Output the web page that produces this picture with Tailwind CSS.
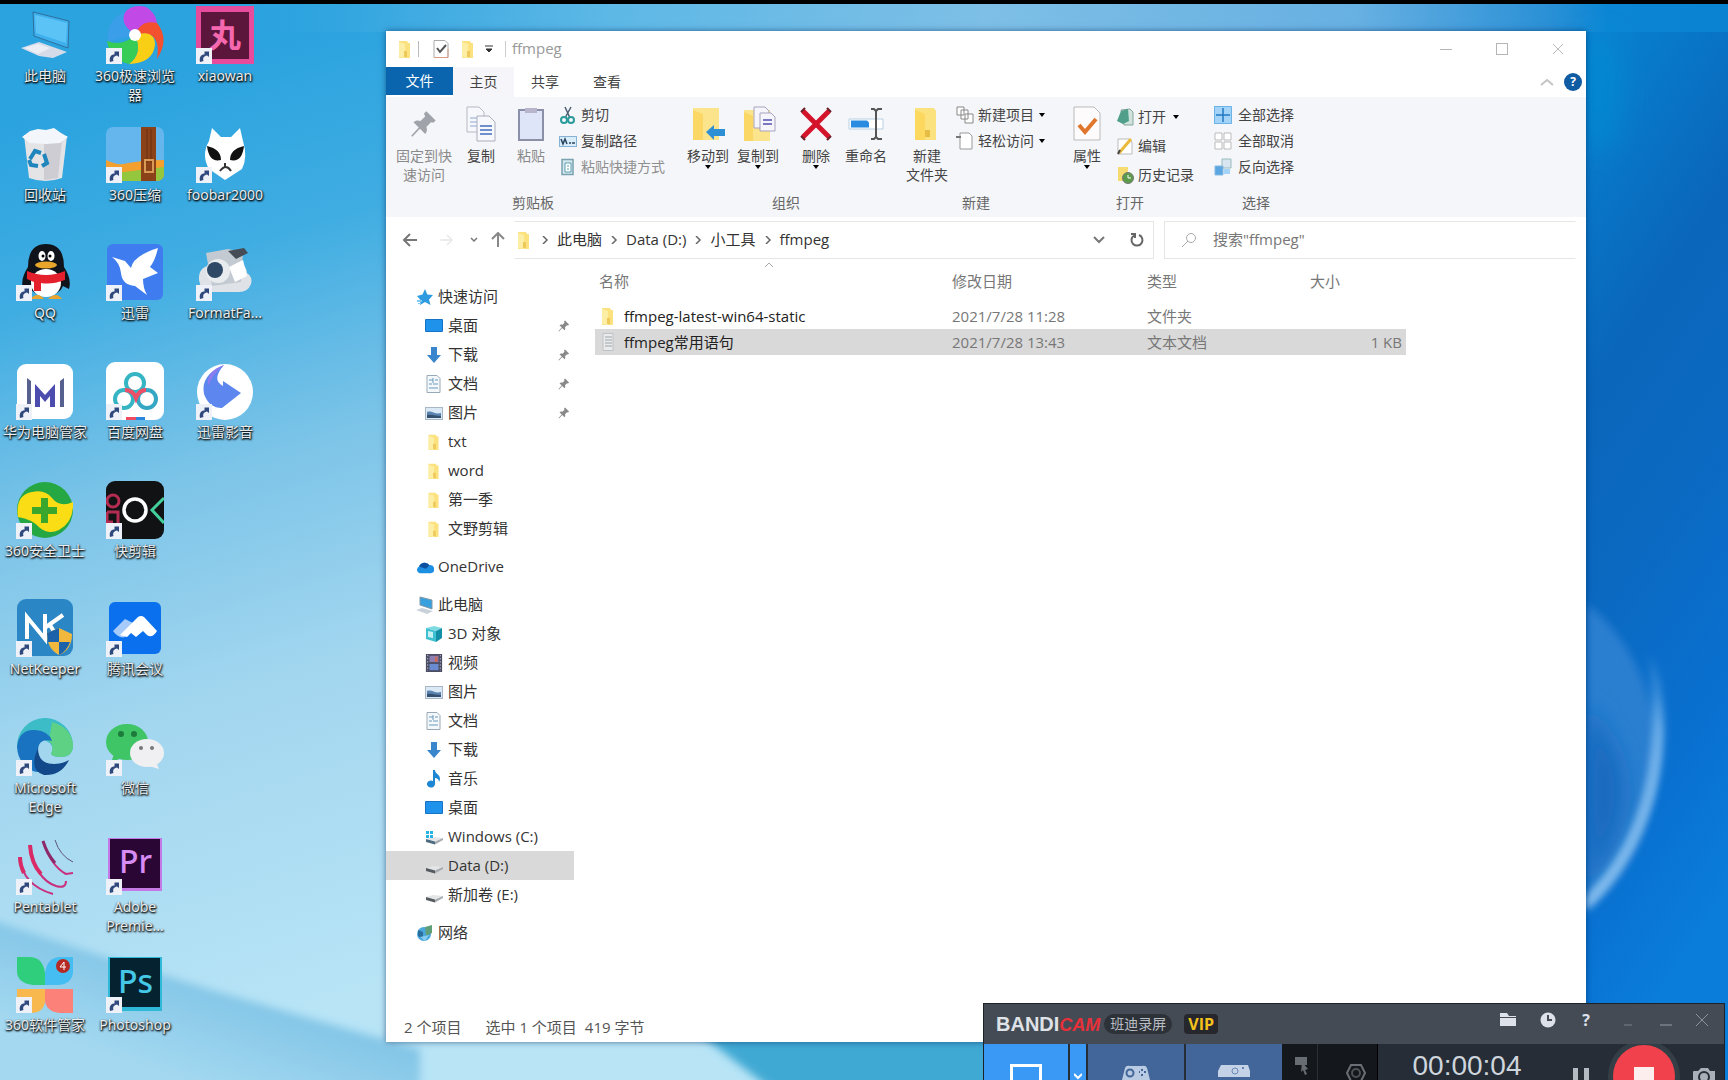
<!DOCTYPE html>
<html lang="zh-CN">
  <head>
    <meta charset="UTF-8" />
    <meta name="viewport" content="width=device-width, initial-scale=1.0" />
    <title>ffmpeg</title>
    <script src="https://cdn.jsdelivr.net/npm/@tailwindcss/browser@4"></script>
  </head>
  <body class="relative h-screen overflow-hidden bg-black pt-1 text-sm text-[#333] font-['Open_Sans','Noto_Sans_CJK_SC',sans-serif]">
    <!-- shared icons -->
    <svg class="hidden">
      <symbol id="shortcut" viewBox="0 0 16 16">
        <rect width="16" height="16" fill="#eef2f8" />
        <path d="M4 14C3 9 5 6.500 8.500 6.500V3.500H13V9L11 7.500C8 8 6.500 10 7.500 13Z" fill="#30497d" />
      </symbol>
      <symbol id="folder" viewBox="0 0 18 20">
        <path d="M3 2h8l1 2h2v15H3z" fill="#fbe27e" />
        <path d="M3 3l6 2v14l-6-1z" fill="#fdeea6" />
        <path d="M8 12h3v6H8z" fill="#eec95a" />
      </symbol>
      <symbol id="pin" viewBox="0 0 24 24">
        <path d="M14 1l8 8-2 2-2-.5-4 4c1 2.500.5 4.500-1 6l-4.500-4.500L2 23l-1-1 6.500-7L3 10.500c1.500-1.500 4-2 6-1l4-4L12 3z" fill="currentColor" />
      </symbol>
      <symbol id="star" viewBox="0 0 18 18">
        <path d="M9 1l2.300 5.600L17 7l-4 4.500L14.500 17 9 14l-5 3 .5-5L1 8l5.500-1.500z" fill="#2e9be0" />
        <path d="M1 12h5v2H1zM2 15h3v1H2z" fill="#7ec8f2" />
      </symbol>
      <symbol id="desktop" viewBox="0 0 18 18">
        <rect y="2" width="18" height="13" rx="1" fill="#1673c6" />
        <rect x="1" y="3" width="16" height="11" fill="#1f93ec" />
      </symbol>
      <symbol id="download" viewBox="0 0 18 18">
        <path d="M6 1h6v8h4l-7 8-7-8h4z" fill="#3a86cc" />
      </symbol>
      <symbol id="document" viewBox="0 0 18 18">
        <path d="M2 .5h10l3 3v14H2z" fill="#f4f8fb" stroke="#9aa9b7" />
        <path d="M4 5h4M10 5h3M4 9h3M8 9h5M4 13h9M8 3v5" stroke="#6899bd" />
      </symbol>
      <symbol id="picture" viewBox="0 0 18 18">
        <rect x=".5" y="3.500" width="17" height="12" fill="#dbe9f6" stroke="#a8b6c6" />
        <path d="M2 8c5-2 8 3 14 1v5H2z" fill="#5b83b0" />
        <path d="M2 11c5-1 9 1 14 1v2H2z" fill="#35506f" />
      </symbol>
      <symbol id="cloud" viewBox="0 0 20 16">
        <path d="M4 15a4 4 0 0 1-.5-7.500A6.500 6.500 0 0 1 15 6a4.500 4.500 0 0 1 1.500 9z" fill="#1d8fe3" />
        <path d="M3.500 7.500A6.500 6.500 0 0 1 15 6l-4 4z" fill="#0b4f9e" />
      </symbol>
      <symbol id="pc" viewBox="0 0 18 18">
        <path d="M4 1l12 3v9L4 9z" fill="#38a0dc" stroke="#8398a8" />
        <path d="M0 14l6-2 11 3-6 3z" fill="#c9d2da" />
      </symbol>
      <symbol id="cube" viewBox="0 0 18 18">
        <path d="M1 3l8-2 8 2-6 3z" fill="#7fdbe2" />
        <path d="M1 3l10 3v11L1 14z" fill="#3fc0d1" />
        <path d="M17 3l-6 3v11l6-4z" fill="#128ea6" />
        <path d="M3 6l5 1v6l-5-1z" fill="#c7f1f4" />
      </symbol>
      <symbol id="video" viewBox="0 0 18 20">
        <rect width="18" height="20" fill="#4a4c63" />
        <rect x="4" y="2" width="10" height="7" fill="#8d7fb2" />
        <rect x="4" y="11" width="10" height="7" fill="#6a8bd0" />
        <path d="M10 3h3v6h-3z" fill="#c96a5b" />
        <path d="M2 1v18M16 1v18" stroke="#c8cbd8" stroke-dasharray="1.500 2" />
      </symbol>
      <symbol id="music" viewBox="0 0 18 18">
        <path d="M8 0h2c0 4 5 4 5 9 0 1-.5 2-1 3 0-3-2-4-4-4v6a4 3.500 0 1 1-2-3z" fill="#1d87d3" />
      </symbol>
      <symbol id="drive" viewBox="0 0 18 18">
        <path d="M1 11l7-2 10 1-8 3z" fill="#e3e5e7" />
        <path d="M1 11l9 2.500v3L1 14z" fill="#555b61" />
        <path d="M10 13.500L18 10v2l-8 4.500z" fill="#a8adb2" />
      </symbol>
      <symbol id="windrive" viewBox="0 0 18 18">
        <path d="M1 11l7-2 10 1-8 3z" fill="#e3e5e7" />
        <path d="M1 11l9 2.500v3L1 14z" fill="#4e6b80" />
        <path d="M10 13.500L18 10v2l-8 4.500z" fill="#a8adb2" />
        <path d="M1 3h3v3H1zM5 3h3v3H5zM1 7h3v3H1zM5 7h3v3H5z" fill="#27b3e4" />
      </symbol>
      <symbol id="network" viewBox="0 0 18 18">
        <circle cx="8" cy="10" r="7" fill="#49a7de" />
        <path d="M2 6l5 2v7l-5-3z" fill="#2b6f9e" />
        <path d="M9 3l7-2v8l-6 3z" fill="#5f9f7a" />
        <path d="M4 13l9-2-4 6z" fill="#85cdf0" />
      </symbol>
    </svg>

    <main class="relative h-full overflow-hidden bg-[#2ba3df]">
      <!-- wallpaper -->
      <svg class="absolute inset-0 h-full w-full" viewBox="0 0 1728 1076" preserveAspectRatio="none">
        <defs>
          <linearGradient id="sky" gradientUnits="userSpaceOnUse" x1="60" y1="100" x2="330" y2="1000">
            <stop offset="0" stop-color="#2ba3df" />
            <stop offset=".2" stop-color="#40ade2" />
            <stop offset=".42" stop-color="#7cc4e8" />
            <stop offset=".65" stop-color="#a2d6ef" />
            <stop offset="1" stop-color="#b8e4f6" />
          </linearGradient>
          <linearGradient id="top" x1="0" x2="1">
            <stop offset="0" stop-color="#2ba3df" stop-opacity="0" />
            <stop offset=".1" stop-color="#3ba9e1" />
            <stop offset=".25" stop-color="#5db8e6" />
            <stop offset=".5" stop-color="#7dbfe6" />
            <stop offset=".75" stop-color="#67b0e2" />
            <stop offset=".88" stop-color="#2a90d6" />
            <stop offset=".92" stop-color="#0a86d4" />
            <stop offset="1" stop-color="#0a82d2" />
          </linearGradient>
          <linearGradient id="right" x1="0" y1="0" x2="0.2" y2="1">
            <stop offset="0" stop-color="#0a86d4" />
            <stop offset=".12" stop-color="#087bcb" />
            <stop offset=".35" stop-color="#0a66ba" />
            <stop offset=".55" stop-color="#0b69c1" />
            <stop offset=".8" stop-color="#0970d0" />
            <stop offset="1" stop-color="#0a7ddb" />
          </linearGradient>
          <linearGradient id="wave" gradientUnits="userSpaceOnUse" x1="200" y1="980" x2="170" y2="1070">
            <stop offset="0" stop-color="#84c6e7" />
            <stop offset="1" stop-color="#a3d8f0" />
          </linearGradient>
          <linearGradient id="arc" x1="0" y1="0" x2="0" y2="1">
            <stop offset="0" stop-color="#7db9ee" stop-opacity="0" />
            <stop offset=".3" stop-color="#7db9ee" />
            <stop offset="1" stop-color="#8cc4f2" />
          </linearGradient>
          <filter id="soft" x="-50%" y="-50%" width="200%" height="200%"><feGaussianBlur stdDeviation="12" /></filter>
          <filter id="edge" x="-50%" y="-50%" width="200%" height="200%"><feGaussianBlur stdDeviation="4" /></filter>
        </defs>
        <rect width="1728" height="1076" fill="url(#sky)" />
        <path d="M-20 912C80 945 200 985 420 1045V1100H-20z" fill="url(#wave)" filter="url(#edge)" />
        <path d="M700 1030H1010V1100H790z" fill="#3fa9d3" filter="url(#edge)" />
        <rect x="1586" width="142" height="1076" fill="url(#right)" />
        <rect x="240" width="1488" height="28" fill="url(#top)" />
        <ellipse cx="1600" cy="90" rx="24" ry="60" fill="#0790d6" fill-opacity=".5" filter="url(#soft)" />
        <path d="M1586 600C1640 640 1670 720 1650 800C1640 850 1610 890 1586 905Z" fill="#2b7fd0" filter="url(#edge)" />
        <path d="M1586 700C1630 760 1640 800 1586 885Z" fill="#1468bd" filter="url(#soft)" />
        <path d="M1650 650C1676 760 1640 850 1584 903" fill="none" stroke="url(#arc)" stroke-width="8" filter="url(#edge)" />
        <path d="M1654 690C1664 770 1640 845 1588 896" fill="none" stroke="url(#arc)" stroke-width="5" filter="url(#edge)" />
      </svg>

      <!-- desktop shortcuts -->
      <ul id="shortcuts" class="absolute inset-y-0 left-0 grid grid-flow-col grid-rows-9 auto-cols-[90px] pt-[2px] pb-[6px] font-['Noto_Sans','Noto_Sans_CJK_SC',sans-serif]"></ul>

      <!-- explorer window -->
      <section class="absolute top-[27px] right-[142px] bottom-[38px] left-[386px] flex flex-col bg-white shadow-[0_0_6px_rgba(0,40,90,0.6)]">
        <header class="flex h-9 items-center pl-2.5 text-[15px] text-[#999]">
          <svg class="h-5 w-[18px]"><use href="#folder" /></svg>
          <span class="ml-1 h-4 w-px bg-[#bbb]"></span>
          <svg class="ml-3.5 h-5 w-4" viewBox="0 0 16 20">
            <path d="M1 1.500h11l3 3v14H1z" fill="#fff" stroke="#aaa" />
            <path d="M1 18.500h14V10" fill="none" stroke="#dc9a83" />
            <path d="M4 9l3 4 6-7" fill="none" stroke="#555" stroke-width="2" />
          </svg>
          <svg class="ml-2.5 h-5 w-[18px]"><use href="#folder" /></svg>
          <button aria-label="自定义快速访问工具栏" class="ml-1.5 w-3">
            <svg class="h-3 w-3" viewBox="0 0 12 12"><path d="M2 3h8M3 6h6l-3 3z" fill="#333" stroke="#333" /></svg>
          </button>
          <span class="ml-2.5 h-4 w-px bg-[#ccc]"></span>
          <h1 class="ml-1.5">ffmpeg</h1>
          <div class="ml-auto flex">
            <button aria-label="最小化" class="flex h-9 w-14 items-center justify-center"><svg class="h-3 w-3" viewBox="0 0 12 12"><path d="M0 6.500h12" stroke="#b5b5b5" /></svg></button>
            <button aria-label="最大化" class="flex h-9 w-14 items-center justify-center"><svg class="h-3 w-3" viewBox="0 0 12 12"><rect x=".5" y=".5" width="11" height="11" fill="none" stroke="#b5b5b5" /></svg></button>
            <button aria-label="关闭" class="flex h-9 w-14 items-center justify-center"><svg class="h-2.5 w-2.5" viewBox="0 0 10 10"><path d="M0 0l10 10M10 0L0 10" stroke="#bbb" /></svg></button>
          </div>
        </header>

        <div class="flex h-[30px] shrink-0 text-[#444]">
          <button class="h-7 w-[67px] bg-[#0a64ae] text-white">文件</button>
          <button class="w-[61px] bg-[#f6f6fa]">主页</button>
          <button class="w-[62px]">共享</button>
          <button class="w-[62px]">查看</button>
          <div class="ml-auto flex items-center gap-2.5 pr-1">
            <button aria-label="最小化功能区"><svg class="h-2 w-3.5" viewBox="0 0 14 8"><path d="M1 7l6-5 6 5" fill="none" stroke="#c4c4c4" stroke-width="2" /></svg></button>
            <button aria-label="帮助" class="h-[18px] w-[18px] rounded-full bg-[#0f5ca3] text-xs leading-[18px] font-bold text-white">?</button>
          </div>
        </div>

        <!-- ribbon -->
        <div class="flex h-[120px] shrink-0 bg-[#f5f6fa] pt-[5px] pl-[7px] text-[#444]">
          <div class="flex w-[280px] flex-col">
            <div class="flex flex-1">
              <button class="flex w-[62px] flex-col items-center pt-1 leading-[19px] text-[#8a8a8a]">
                <svg class="mt-1 mb-2 h-7 w-7 shrink-0 text-[#a0a4aa]"><use href="#pin" /></svg>
                固定到快<br />速访问
              </button>
              <button class="flex w-[52px] flex-col items-center pt-1 leading-[19px]">
                <svg class="mb-1 h-9 w-8 shrink-0" viewBox="0 0 32 36">
                  <path d="M2 1h12l5 5v20H2z" fill="#f7f8fb" stroke="#b5b9c4" />
                  <path d="M5 12h7M5 16h7M5 20h7" stroke="#8fa7d2" />
                  <path d="M12 10h12l6 6v19H12z" fill="#f7f8fb" stroke="#a9aebb" />
                  <path d="M15 20h12M15 24h12M15 28h12" stroke="#6d8fcb" stroke-width="2" />
                </svg>
                复制
              </button>
              <button class="flex w-12 flex-col items-center pt-1 leading-[19px] text-[#8a8a8a]">
                <svg class="mb-1 h-9 w-7 shrink-0" viewBox="0 0 28 36">
                  <path d="M2 4h24v30H2z" fill="#dfe5f8" stroke="#8b90a8" stroke-width="2" />
                  <path d="M8 2h12v5H8z" fill="#b7b4cc" />
                </svg>
                粘贴
              </button>
              <div class="ml-1 flex flex-col">
                <button class="flex h-[26px] items-center gap-1">
                  <svg class="h-[18px] w-[18px]" viewBox="0 0 18 18"><path d="M6 1l5 11M12 1L6 12" stroke="#4b5f74" stroke-width="1.500" /><circle cx="5" cy="14" r="3" fill="none" stroke="#2a9b9b" stroke-width="2" /><circle cx="12" cy="14" r="3" fill="none" stroke="#2a9b9b" stroke-width="2" /></svg>
                  剪切
                </button>
                <button class="flex h-[26px] items-center gap-1">
                  <svg class="h-[18px] w-[18px]" viewBox="0 0 18 18"><rect x=".5" y="4.500" width="17" height="10" fill="#d9ecfa" stroke="#86b2d4" /><path d="M2 7l2 5 2-5 2 5M10 11h2M13 11h3" fill="none" stroke="#27435f" stroke-width="1.500" /></svg>
                  复制路径
                </button>
                <button class="flex h-[26px] items-center gap-1 text-[#8f8f8f]">
                  <svg class="h-[18px] w-[18px]" viewBox="0 0 18 18"><path d="M3 1.500h11v15H3z" fill="#d4e7ee" stroke="#7aa3b0" stroke-width="1.500" /><path d="M6 5h6v9H6z" fill="#fff" stroke="#5b9fb2" /><path d="M8 8h2M8 11h2" stroke="#5b9fb2" /></svg>
                  粘贴快捷方式
                </button>
              </div>
            </div>
            <p class="pb-1 text-center leading-5 text-[#666]">剪贴板</p>
          </div>

          <div class="ml-[9px] flex w-[208px] flex-col">
            <div class="flex flex-1">
              <button class="flex w-[52px] flex-col items-center pt-1 leading-[19px]">
                <svg class="mb-1 h-9 w-9 shrink-0" viewBox="0 0 36 36">
                  <path d="M3 2h26v32H3z" fill="#fce48c" />
                  <path d="M3 4l10 4v26H3z" fill="#fbd866" />
                  <path d="M16 26l8-7v4h11v7H24v4z" fill="#2f8fd4" />
                </svg>
                移动到
                <svg class="h-1 w-2" viewBox="0 0 8 4"><path d="M1 0h6L4 4z" /></svg>
              </button>
              <button class="flex w-12 flex-col items-center pt-1 leading-[19px]">
                <svg class="mb-1 h-9 w-9 shrink-0" viewBox="0 0 36 36">
                  <path d="M4 4h26v31H4z" fill="#fce48c" />
                  <path d="M4 6l9 4v25H4z" fill="#fbd866" />
                  <path d="M14 1h11l4 4v17H14z" fill="#f6f5fb" stroke="#a7a3bd" />
                  <path d="M20 7h11l4 4v14H20z" fill="#f6f5fb" stroke="#a7a3bd" />
                  <path d="M23 14h9M23 18h9" stroke="#7b79c4" stroke-width="2" />
                </svg>
                复制到
                <svg class="h-1 w-2" viewBox="0 0 8 4"><path d="M1 0h6L4 4z" /></svg>
              </button>
              <button class="ml-2 flex w-[52px] flex-col items-center pt-1 leading-[19px]">
                <svg class="mb-1 h-9 w-8 shrink-0" viewBox="0 0 32 36">
                  <path d="M3 5l26 26M29 5L3 31" stroke="#d3142a" stroke-width="5" />
                  <path d="M1 6l4-4M31 6l-4-4M1 30l4 4M31 30l-4 4" stroke="#6b1a26" stroke-width="2" />
                </svg>
                删除
                <svg class="h-1 w-2" viewBox="0 0 8 4"><path d="M1 0h6L4 4z" /></svg>
              </button>
              <button class="flex w-12 flex-col items-center pt-1 leading-[19px]">
                <svg class="mb-1 h-9 w-9 shrink-0" viewBox="0 0 36 36">
                  <path d="M1 13h34v10H1z" fill="#fff" stroke="#b8cfe3" />
                  <path d="M3 14.500h16l2 2v5H3z" fill="#2b8be0" />
                  <path d="M23 3h3l2 2 2-2h4M23 33h3l2-2 2 2h4M28 4v28" fill="none" stroke="#555" stroke-width="2" />
                </svg>
                重命名
              </button>
            </div>
            <p class="pb-1 text-center leading-5 text-[#666]">组织</p>
          </div>

          <div class="ml-3 flex w-[148px] flex-col">
            <div class="flex flex-1">
              <button class="flex w-[50px] flex-col items-center pt-1 leading-[19px]">
                <svg class="mb-1 h-9 w-9 shrink-0" viewBox="0 0 36 36">
                  <path d="M6 2h19l2 3v29H6z" fill="#fbe27e" />
                  <path d="M6 4l10 4v26H6z" fill="#fcd85f" />
                  <path d="M16 24h5v7h-5z" fill="#e5bd45" />
                </svg>
                新建<br />文件夹
              </button>
              <div class="ml-1 flex flex-col">
                <button class="flex h-[26px] items-center gap-1">
                  <svg class="h-[18px] w-[18px]" viewBox="0 0 18 18"><path d="M1 1h7v8H1zM5 4h7v9H5zM9 8h8v9H9z" fill="#fff" stroke="#888" /></svg>
                  新建项目
                  <svg class="h-1 w-2" viewBox="0 0 8 4"><path d="M1 0h6L4 4z" /></svg>
                </button>
                <button class="flex h-[26px] items-center gap-1">
                  <svg class="h-[18px] w-[18px]" viewBox="0 0 18 18"><path d="M4 1h9l3 3v13H4z" fill="#fff" stroke="#999" /><path d="M0 5h5" stroke="#777" stroke-width="2" /></svg>
                  轻松访问
                  <svg class="h-1 w-2" viewBox="0 0 8 4"><path d="M1 0h6L4 4z" /></svg>
                </button>
              </div>
            </div>
            <p class="pb-1 text-center leading-5 text-[#666]">新建</p>
          </div>

          <div class="ml-3.5 flex w-[132px] flex-col">
            <div class="flex flex-1">
              <button class="flex w-[46px] flex-col items-center pt-1 leading-[19px]">
                <svg class="mb-1 h-9 w-7 shrink-0" viewBox="0 0 28 36">
                  <path d="M1 1h20l6 6v27H1z" fill="#fdfbfb" stroke="#bbb" />
                  <path d="M6 19l6 7L23 13" fill="none" stroke="#e0762c" stroke-width="4" />
                </svg>
                属性
                <svg class="h-1 w-2" viewBox="0 0 8 4"><path d="M1 0h6L4 4z" /></svg>
              </button>
              <div class="ml-[6px] flex flex-col">
                <button class="flex h-[29px] items-center gap-1">
                  <svg class="h-[18px] w-[18px]" viewBox="0 0 18 18"><path d="M5 2l9-1 3 3v13H8z" fill="#cfe3dc" stroke="#86a39b" /><path d="M1 13L5 3l7-2 1 12-6 3z" fill="#4f9f8b" /></svg>
                  打开
                  <svg class="ml-0.5 h-1 w-2" viewBox="0 0 8 4"><path d="M1 0h6L4 4z" /></svg>
                </button>
                <button class="flex h-[29px] items-center gap-1">
                  <svg class="h-[18px] w-[18px]" viewBox="0 0 18 18"><path d="M2 2h11l3 3v12H2z" fill="#fff" stroke="#bbb" /><path d="M3 16L15 2" stroke="#e9b93b" stroke-width="3" /><path d="M2 17l2-4" stroke="#444" stroke-width="2" /></svg>
                  编辑
                </button>
                <button class="flex h-[29px] items-center gap-1">
                  <svg class="h-[18px] w-[18px]" viewBox="0 0 18 18"><path d="M2 1h10v14H2z" fill="#f6dc70" /><circle cx="12" cy="12" r="5.500" fill="#5c9a4b" stroke="#777" /><path d="M12 9v3h3" fill="none" stroke="#fff" /></svg>
                  历史记录
                </button>
              </div>
            </div>
            <p class="pb-1 text-center leading-5 text-[#666]">打开</p>
          </div>

          <div class="ml-3.5 flex w-[92px] flex-col">
            <div class="flex-1 pl-1">
              <button class="flex h-[26px] items-center gap-1.5">
                <svg class="h-[18px] w-[18px]" viewBox="0 0 18 18"><path d="M0 0h18v18H0z" fill="#a3d4f8" /><path d="M9 2v14M2 9h14" stroke="#2179c4" stroke-width="1.500" /><path d="M.5.5h17v17H.5z" fill="none" stroke="#6ab3e8" /></svg>
                全部选择
              </button>
              <button class="flex h-[26px] items-center gap-1.5">
                <svg class="h-[18px] w-[18px]" viewBox="0 0 18 18"><path d="M1 1h7v7H1zM10 1h7v7h-7zM1 10h7v7H1zM10 10h7v7h-7z" fill="#fff" stroke="#bbb" /></svg>
                全部取消
              </button>
              <button class="flex h-[26px] items-center gap-1.5">
                <svg class="h-[18px] w-[18px]" viewBox="0 0 18 18"><path d="M8 1h9v9H8z" fill="#d8e6f2" stroke="#9bb" /><path d="M1 8h8v9H1z" fill="#5ba5e0" stroke="#86b9e3" /><path d="M10 11h6v5h-6z" fill="#a3d4f8" /></svg>
                反向选择
              </button>
            </div>
            <p class="pb-1 text-center leading-5 text-[#666]">选择</p>
          </div>
        </div>

        <!-- address bar -->
        <div class="mt-1 flex h-[38px] shrink-0 items-center pr-2.5 pl-4 text-[15px]">
          <button aria-label="后退"><svg class="h-4 w-4" viewBox="0 0 16 16"><path d="M8 2L2 8l6 6M2 8h13" fill="none" stroke="#777" stroke-width="2" /></svg></button>
          <button aria-label="前进" class="ml-5"><svg class="h-4 w-4" viewBox="0 0 16 16"><path d="M9 3l5 5-5 5M14 8H2" fill="none" stroke="#e8e8e8" stroke-width="1.500" /></svg></button>
          <button aria-label="最近浏览的位置" class="ml-4"><svg class="h-2 w-2" viewBox="0 0 8 8"><path d="M1 2l3 3 3-3" fill="none" stroke="#777" stroke-width="1.500" /></svg></button>
          <button aria-label="上移" class="ml-3"><svg class="h-4 w-4" viewBox="0 0 16 16"><path d="M2 7l6-6 6 6M8 1v14" fill="none" stroke="#888" stroke-width="2" /></svg></button>
          <nav class="ml-2 flex h-full flex-1 items-center border border-[#e6e6e6] border-l-transparent text-[#333]">
            <svg class="h-5 w-[18px]"><use href="#folder" /></svg>
            <svg class="mx-2 h-2 w-2" viewBox="0 0 8 8"><path d="M2 0l4 4-4 4" fill="none" stroke="#666" stroke-width="1.500" /></svg>
            <a href="#">此电脑</a>
            <svg class="mx-2 h-2 w-2" viewBox="0 0 8 8"><path d="M2 0l4 4-4 4" fill="none" stroke="#666" stroke-width="1.500" /></svg>
            <a href="#">Data (D:)</a>
            <svg class="mx-2 h-2 w-2" viewBox="0 0 8 8"><path d="M2 0l4 4-4 4" fill="none" stroke="#666" stroke-width="1.500" /></svg>
            <a href="#">小工具</a>
            <svg class="mx-2 h-2 w-2" viewBox="0 0 8 8"><path d="M2 0l4 4-4 4" fill="none" stroke="#666" stroke-width="1.500" /></svg>
            <a href="#">ffmpeg</a>
            <button aria-label="以前的位置" class="ml-auto"><svg class="h-2.5 w-3" viewBox="0 0 12 10"><path d="M1 2l5 5 5-5" fill="none" stroke="#777" stroke-width="2" /></svg></button>
            <button aria-label="刷新" class="mr-2 ml-6"><svg class="h-4 w-4" viewBox="0 0 16 16"><path d="M10 3a5.500 5.500 0 1 1-5 .5M2 2h4v4" fill="none" stroke="#666" stroke-width="2" /></svg></button>
          </nav>
          <label class="ml-2.5 flex h-full w-[412px] items-center border border-[#e6e6e6] border-r-transparent pl-4">
            <svg class="h-4 w-4" viewBox="0 0 16 16"><circle cx="10" cy="6" r="4.500" fill="none" stroke="#aaa" /><path d="M7 9l-6 6" stroke="#aaa" /></svg>
            <input type="search" aria-label="搜索" placeholder='搜索"ffmpeg"' class="ml-4 min-w-0 flex-1 outline-none placeholder:text-[#777]" />
          </label>
        </div>

        <div class="flex min-h-0 flex-1 text-[15px]">
          <nav class="w-[188px] shrink-0 pt-[23px]">
            <ul id="tree"></ul>
          </nav>
          <div class="flex-1 pl-[21px]">
            <div class="flex h-[10px] w-[347px] items-end justify-center"><svg class="h-2 w-3" viewBox="0 0 12 8"><path d="M2 6l4-4 4 4" fill="none" stroke="#aaa" /></svg></div>
            <table class="w-[811px] table-fixed text-left text-[#777]">
              <thead>
                <tr class="h-6 leading-5">
                  <th class="w-[351px] py-0 pl-1 font-normal">名称</th>
                  <th class="w-[195px] py-0 pl-1.5 font-normal">修改日期</th>
                  <th class="w-[163px] py-0 pl-1.5 font-normal">类型</th>
                  <th class="py-0 pl-1.5 font-normal">大小</th>
                </tr>
              </thead>
              <tbody>
                <tr><td colspan="4" class="h-[9px] p-0"></td></tr>
                <tr class="h-[27px] leading-5">
                  <td class="py-0 pl-1"><a href="#" class="flex items-center gap-[7px] text-[#222]"><svg class="h-5 w-[18px]"><use href="#folder" /></svg>ffmpeg-latest-win64-static</a></td>
                  <td class="py-0 pl-1.5">2021/7/28 11:28</td>
                  <td class="py-0 pl-1.5">文件夹</td>
                  <td></td>
                </tr>
                <tr class="h-[26px] bg-[#d9d9d9] leading-5">
                  <td class="py-0 pl-1"><a href="#" class="flex items-center gap-[7px] text-[#222]"><svg class="h-5 w-[18px]" viewBox="0 0 18 20"><path d="M4 1.500h10v17H4z" fill="#e9ebed" stroke="#bfc2c4" /><path d="M6 5h7M6 8h7M6 11h7M6 14h7" stroke="#9fa3a6" /></svg>ffmpeg常用语句</a></td>
                  <td class="py-0 pl-1.5">2021/7/28 13:43</td>
                  <td class="py-0 pl-1.5">文本文档</td>
                  <td class="py-0 pr-1 text-right">1 KB</td>
                </tr>
              </tbody>
            </table>
          </div>
        </div>

        <footer class="flex h-7 shrink-0 items-center pl-[18px] text-[15px] text-[#555]">
          <span>2 个项目</span>
          <span class="ml-6">选中 1 个项目</span>
          <span class="ml-2">419 字节</span>
        </footer>
      </section>

      <!-- recorder -->
      <section class="absolute right-[3px] bottom-0 left-[983px] border border-b-0 border-[#1d2128] bg-[#262d37]">
        <header class="flex h-10 items-center bg-[#454b54] pl-3">
          <h2 class="text-xl font-extrabold text-[#dfe2e6] font-['Liberation_Sans',sans-serif]">BANDI<span class="text-lg text-[#e8303a] italic">CAM</span></h2>
          <span class="ml-1 rounded-full bg-[#2d3138] px-1.5 text-sm leading-5 text-[#b9bdc4]">班迪录屏</span>
          <span class="ml-3 rounded-sm bg-[#25272c] px-1 text-base leading-5 font-bold text-[#f5c21b]">VIP</span>
          <div class="ml-auto flex items-center pr-4 pb-2">
            <button aria-label="打开文件夹"><svg class="h-4 w-4" viewBox="0 0 16 16"><path d="M0 1h7l2 3h7v1H0zM0 6h16v8H0z" fill="#dde1ea" /></svg></button>
            <button aria-label="定时录制" class="ml-6"><svg class="h-4 w-4" viewBox="0 0 16 16"><circle cx="8" cy="8" r="7.500" fill="#dde1ea" /><path d="M8 3v5h4" fill="none" stroke="#454b54" stroke-width="2" /></svg></button>
            <button aria-label="帮助" class="ml-5 w-5 text-base leading-5 font-bold text-[#dde1ea]">?</button>
            <button aria-label="最小化到托盘" class="ml-7"><svg class="h-4 w-2" viewBox="0 0 8 16"><path d="M0 13h8" stroke="#7b828d" /></svg></button>
            <button aria-label="最小化" class="ml-7"><svg class="h-4 w-3" viewBox="0 0 12 16"><path d="M0 13h12" stroke="#969ca6" /></svg></button>
            <button aria-label="关闭" class="ml-6"><svg class="h-3 w-3" viewBox="0 0 12 12"><path d="M0 0l12 12M12 0L0 12" stroke="#8d939d" /></svg></button>
          </div>
        </header>
        <div class="flex h-9">
          <button aria-label="屏幕录制模式" class="flex w-[84px] justify-center bg-[#3b99f6] pt-5"><svg class="h-4 w-8" viewBox="0 0 32 16"><path d="M1.500 18V1.500h29V18" fill="none" stroke="#fff" stroke-width="3" /></svg></button>
          <button aria-label="选择区域" class="ml-0.5 flex w-4 justify-center bg-[#3b99f6] pt-7"><svg class="h-2 w-2" viewBox="0 0 8 8"><path d="M0 2l4 4 4-4" fill="none" stroke="#fff" stroke-width="2" /></svg></button>
          <button aria-label="游戏录制模式" class="ml-0.5 flex w-24 justify-center bg-[#42669a] pt-5">
            <svg class="h-4 w-8" viewBox="0 0 32 16"><path d="M2 16L5 4q1-3 5-2h12q4-1 5 2l3 12z" fill="#b9cbe2" /><circle cx="10" cy="9" r="3.500" fill="none" stroke="#42669a" stroke-width="2" /><path d="M22 5v2M22 10v2M19 8h1M24 8h2" stroke="#42669a" stroke-width="2" /></svg>
          </button>
          <button aria-label="设备录制模式" class="ml-0.5 flex w-24 justify-center bg-[#42669a] pt-5"><svg class="h-4 w-8" viewBox="0 0 32 16"><path d="M3 1h27l2 6v6H0V7z" fill="#c3d2e6" /><circle cx="17" cy="7" r="3" fill="none" stroke="#6d89b2" /><circle cx="25" cy="4" r="1" fill="#42669a" /></svg></button>
          <div class="flex w-[95px] bg-[#14181c]">
            <button aria-label="鼠标效果" class="w-9 border-r border-[#2b3036] pt-2 pl-3"><svg class="h-5 w-4" viewBox="0 0 16 20"><path d="M1 1h12v8H1zM8 6l6 7-3 1 2 4-2 1-2-5-2 2z" fill="#686d74" /></svg></button>
            <button aria-label="摄像头" class="flex flex-1 justify-center pt-5 pl-4"><svg class="h-5 w-5" viewBox="0 0 20 20"><path d="M5 1h10l4 8-4 8H5L1 9z" fill="none" stroke="#6a7076" stroke-width="2" /><circle cx="10" cy="9" r="4" fill="none" stroke="#4d5257" stroke-width="2" /></svg></button>
          </div>
          <time class="flex-1 border-l border-black pt-2 text-center text-[28px] leading-7 text-[#cfd5dc] font-['Liberation_Sans',sans-serif]">00:00:04</time>
          <button aria-label="暂停" class="ml-4 pt-6"><svg class="h-3 w-5" viewBox="0 0 20 12"><path d="M1 0h5v12H1zM12 0h5v12h-5z" fill="#b4bac2" /></svg></button>
          <button aria-label="停止录制" class="mr-3 ml-4 h-9 w-[72px]">
            <svg class="h-9 w-[72px]" viewBox="0 0 72 36"><circle cx="36" cy="32" r="36" fill="#343e46" /><circle cx="36" cy="32" r="31" fill="#f0414c" /><path d="M26 23h20v13H26z" fill="#fdeeee" /></svg>
          </button>
          <button aria-label="截图" class="mr-2 pt-6"><svg class="h-3 w-6" viewBox="0 0 24 12"><path d="M1 14V4q0-1 1-1h4l3-3h7l2 3h5v11" fill="#a9afb8" /><circle cx="12" cy="9" r="5" fill="#a9afb8" stroke="#262d37" stroke-width="2" /></svg></button>
        </div>
      </section>
    </main>

    <script>
      // [label, drawing on a 58x58 canvas, has shortcut arrow]
      const shortcuts = [
        ["此电脑", '<path d="M17 6l36 9-1 27-34-12z" fill="#3fb0ee" stroke="#2f6e9c"/><path d="M19 9l32 8-1 20-30-10z" fill="#5cc3f6"/><path d="M5 42l18-6 28 10-14 6-14-2z" fill="#d6dbe9"/><path d="M8 42l14-4 12 4-12 6z" fill="#eceef6"/>', false],
        ["回收站", '<path d="M8 10l5 43q16 6 33 0l5-42z" fill="#e4e3e6"/><path d="M28 12l18 3-4 38-14 2z" fill="#cfcdd4"/><path d="M6 12l8-6 8-2 8 1 8-2 7 5 7 4-8 6-14 1-16-1z" fill="#f3f6fa"/><path d="M14 34l5-8 6 2M28 29l3 9-5 3M22 41l-7-1-2-5" fill="none" stroke="#1f86bd" stroke-width="4"/>', false],
        ["QQ", '<path d="M12 24Q12 1 30 1t18 23q8 12 5 22l-6-3q-3 9-17 9t-17-9l-6 3q-3-10 5-22z" fill="#10131a"/><ellipse cx="30" cy="40" rx="15" ry="14" fill="#fff"/><path d="M11 28q19 8 38 0v9q-14 5-24 3v8h-7v-9l-7-3z" fill="#e3202c"/><ellipse cx="26" cy="13" rx="3.500" ry="5" fill="#fff"/><ellipse cx="35" cy="13" rx="3.500" ry="5" fill="#fff"/><circle cx="27" cy="13" r="1.500"/><circle cx="34" cy="13" r="1.500"/><ellipse cx="30" cy="22" rx="11" ry="3.500" fill="#eaa62b"/><path d="M14 56q8-8 14 0zM32 56q8-8 14 0z" fill="#e8a531"/>', true],
        ["华为电脑管家", '<rect x="1" y="2" width="56" height="55" rx="9" fill="#fff"/><path d="M11 16l4 3v26h-4zM48 16l-4 3v26h4z" fill="#56618f"/><path d="M19 45V22l10 11 10-11v23h-5V34l-5 6-5-6v11z" fill="#4b4cae"/>', true],
        ["360安全卫士", '<circle cx="29" cy="29" r="28" fill="#25a844"/><path d="M2 36Q-1 14 16 11q13-3 20 6 8 10 21 4 1 20-14 28-10 5-19-2-8-9-22-11z" fill="#fbdd16"/><path d="M25 17h7v9h9v7h-9v9h-7v-9h-9v-7h9z" fill="#3aa62b"/>', true],
        ["NetKeeper", '<rect x="1" width="56" height="57" rx="9" fill="#2b86c6"/><path d="M11 40V18l18 22V15M30 28l17-12M34 26l8 13" fill="none" stroke="#fff" stroke-width="4"/><path d="M31 34l12-5 13 6q0 16-13 21-12-6-12-22z" fill="#f1b83d"/><path d="M31 34l12-5v14H32zM43 43h11q-3 9-11 13z" fill="#1c62aa"/>', true],
        ["Microsoft Edge", '<path d="M1 29A28 28 0 0 1 57 27q0 12-12 12-8 0-10-3 4-8-3-12-11-8-23-1z" fill="#3bbcc6"/><path d="M36 4q20 6 21 23 0 12-12 12-8 0-10-3 4-8-2-13z" fill="#5fd184"/><path d="M1 29q2-18 18-17 14 1 17 11-13-3-14 8-1 12 11 18-8 7-16 4Q2 46 1 29z" fill="#1a73c0"/><path d="M22 30q0 16 16 16 8 0 15-4-8 16-25 15Q12 52 22 30z" fill="#12498a"/>', true],
        ["Pentablet", '<path d="M4 20q2 28 33 37M14 8q5 34 26 41 10 3 10-5M27 4q8 25 23 33l7-1" fill="none" stroke="#c9307e" stroke-width="2"/><path d="M14 8q1 18 11 29M4 20q0 8 4 16" fill="none" stroke="#d92a66" stroke-width="4"/><path d="M27 4q4 13 12 22" fill="none" stroke="#8d2a6a" stroke-width="3"/><path d="M39 3q5 16 18 22" fill="none" stroke="#5d5678"/>', true],
        ["360软件管家", '<path d="M1 2h12q14 0 16 16v12H17Q1 28 1 16z" fill="#2fce7c"/><path d="M57 2v16q-2 12-16 12H29V18Q31 2 45 2z" fill="#45bdf2"/><path d="M1 34h28v13q-2 11-14 11H1z" fill="#f9b84d"/><path d="M29 34h28v24H43q-14-2-14-14z" fill="#fb8179"/><circle cx="47" cy="11" r="7" fill="#b52a25"/><path d="M48 15V7l-4 5h6" fill="none" stroke="#fff"/>', true],
        ["360极速浏览器", '<path d="M29 29Q10 15 20 5q8-7 20-4 10 6 11 16z" fill="#c14ae6"/><path d="M29 29L2 36Q-1 14 20 5q-8 12 9 24z" fill="#3a9ee8"/><path d="M29 29q6-16 22-12 13 16 0 36Q56 22 29 29z" fill="#f2502e"/><path d="M29 29q20-6 20 10-2 18-26 19 14-10 6-29z" fill="#f9cf15"/><path d="M1 35q15 6 28-6 8 18-6 29Q4 54 1 35z" fill="#37cc56"/><circle cx="29" cy="29" r="6" fill="#fff"/>', true],
        ["360压缩", '<rect x="0" y="2" width="58" height="53" rx="7" fill="#64b6ec"/><path d="M0 35q10 5 17 4 20-4 41-4v13q0 8-8 8H8q-8 0-8-8z" fill="#f4a02f"/><path d="M10 48l48-6v6q0 8-8 8H8z" fill="#94c63e"/><rect x="35" y="2" width="15" height="54" fill="#8b4219"/><path d="M41 4v34M45 4v34" stroke="#6c2f10"/><path d="M39 35h8v12h-8z" fill="none" stroke="#d89a55" stroke-width="2"/>', true],
        ["迅雷", '<rect x="1" y="1" width="56" height="56" rx="6" fill="#3e7cf0"/><path d="M6 14l13 4 6 7q2-12 27-20-3 13-8 19l8 6-15 6q0 9 4 16l-12-9Q16 42 15 30q-1-10-9-16z" fill="#fff"/>', true],
        ["百度网盘", '<rect width="58" height="58" rx="9" fill="#fff"/><circle cx="29" cy="21" r="9" fill="none" stroke="#35b5c4" stroke-width="4"/><circle cx="18" cy="37" r="9" fill="none" stroke="#35b5c4" stroke-width="4"/><circle cx="41" cy="37" r="9" fill="none" stroke="#35a7c4" stroke-width="4"/><path d="M19 28q8 0 11 8 3-8 10-8" fill="none" stroke="#ed4f69" stroke-width="4"/><path d="M20 55h10v3H20z" fill="#ee4b61"/><path d="M30 55h9v3h-9z" fill="#2b86e0"/>', true],
        ["快剪辑", '<rect width="58" height="58" rx="9" fill="#101214"/><circle cx="29" cy="29" r="11" fill="none" stroke="#fff" stroke-width="3.500"/><path d="M58 17L46 29l12 13" fill="none" stroke="#43cf9b" stroke-width="3"/><circle cx="7" cy="20" r="6" fill="none" stroke="#b52c52" stroke-width="3"/><path d="M1 31h11v14M1 31v10h6" fill="none" stroke="#b52c52" stroke-width="3"/>', true],
        ["腾讯会议", '<rect x="3" y="3" width="52" height="52" rx="6" fill="#0a70ee"/><path d="M7 32l12-12 8 4-8 14q-6 2-12-6z" fill="#a6cbfb"/><path d="M14 36l18-18q3-2 6 0l13 14q-5 8-10 4l-4-4-7 6-5-4-4 4z" fill="#fff"/>', true],
        ["微信", '<ellipse cx="21" cy="24" rx="21" ry="18" fill="#3fc566"/><path d="M8 36l-3 9 10-5z" fill="#3fc566"/><circle cx="15" cy="16" r="3" fill="#1c7a3b"/><circle cx="28" cy="16" r="3" fill="#1c7a3b"/><ellipse cx="41" cy="35" rx="17" ry="14" fill="#f0f0f2"/><path d="M50 44l3 7-10-3z" fill="#f0f0f2"/><circle cx="35" cy="30" r="2" fill="#777"/><circle cx="46" cy="30" r="2" fill="#777"/>', true],
        ["Adobe Premie...", '<path d="M2 1h54v53H2z" fill="#c479e6"/><path d="M4 2h50v49H4z" fill="#2a0634"/><text x="13" y="36" font-size="32" font-weight="500" fill="#d78bf5">Pr</text>', true],
        ["Photoshop", '<path d="M2 2h54v54H2z" fill="#30b8d8"/><path d="M4 3h50v49H4z" fill="#04222f"/><text x="12" y="38" font-size="32" font-weight="500" fill="#45c7e8">Ps</text>', true],
        ["xiaowan", '<path d="M0 0h58v58H0z" fill="#e64c9b"/><path d="M5 6h48v47H5z" fill="#5c163c"/><text x="13" y="41" font-size="32" font-weight="700" fill="#f568b0">丸</text>', true],
        ["foobar2000", '<path d="M16 3l9 9h10l9-9 3 13q5 16-1 28L29 55 13 44Q5 30 13 16z" fill="#fff"/><path d="M11 21q14 3 14 14-12 3-14-14zM48 21q-14 3-14 14 12 3 14-14z" fill="#111"/><path d="M24 46q6-8 11 0M29 38v4" fill="none" stroke="#333" stroke-width="2"/>', true],
        ["FormatFa...", '<path d="M3 37Q2 24 15 22q8-10 18-4 17 0 18 12 6 4 4 11-3 8-12 8H16Q4 47 3 37z" fill="#dfe3e8"/><path d="M10 10l22-4 15 3-2 30-29 4z" fill="#c4cad1"/><circle cx="22" cy="28" r="12" fill="#e9ecef"/><circle cx="19" cy="27" r="8" fill="#2f4865"/><path d="M32 8l16-3 4 5-12 6z" fill="#464c55"/><path d="M33 24l14-7 4 16-12 6z" fill="#fff"/>', true],
        ["迅雷影音", '<circle cx="29" cy="30" r="28" fill="#fff"/><path d="M28 3Q4 13 8 32q5 14 18 14l19-15-18-12v5q-12-6 1-21z" fill="#5d87ee"/><path d="M28 3Q10 9 12 24q6-14 16-21z" fill="#8d7bf0"/>', true],
      ];

      document.getElementById("shortcuts").innerHTML = shortcuts
        .map(
          ([label, art, linked]) => `
        <li class="flex flex-col items-center">
          <a href="#" class="flex w-[88px] flex-col items-center text-center">
            <span class="relative block h-[58px] w-[58px]">
              <svg class="h-[58px] w-[58px]" viewBox="0 0 58 58">${art}</svg>
              ${linked ? '<svg class="absolute bottom-0 left-0 h-4 w-4"><use href="#shortcut" /></svg>' : ""}
            </span>
            <span class="mt-[2px] w-full leading-[19px] text-[#e9edf0] [text-shadow:0_1px_2px_#000,1px_1px_2px_#000]">${label}</span>
          </a>
        </li>`
        )
        .join("");

      // [icon, label, flag]
      const tree = [
        [
          ["star", "快速访问"],
          ["desktop", "桌面", "pinned"],
          ["download", "下载", "pinned"],
          ["document", "文档", "pinned"],
          ["picture", "图片", "pinned"],
          ["folder", "txt"],
          ["folder", "word"],
          ["folder", "第一季"],
          ["folder", "文野剪辑"],
        ],
        [["cloud", "OneDrive"]],
        [
          ["pc", "此电脑"],
          ["cube", "3D 对象"],
          ["video", "视频"],
          ["picture", "图片"],
          ["document", "文档"],
          ["download", "下载"],
          ["music", "音乐"],
          ["desktop", "桌面"],
          ["windrive", "Windows (C:)"],
          ["drive", "Data (D:)", "selected"],
          ["drive", "新加卷 (E:)"],
        ],
        [["network", "网络"]],
      ];

      const row = ([icon, label, flag], i) => `
        <li class="${flag === "selected" ? "bg-[#d9d9d9]" : ""}">
          <a href="#" class="flex h-[29px] items-center ${i === 0 ? "gap-1 pl-[30px]" : "gap-[5px] pl-[39px]"}">
            <svg class="h-[18px] w-[18px]"><use href="#${icon}" /></svg>
            ${label}
            ${flag === "pinned" ? '<svg class="mr-1 ml-auto h-3 w-3 text-[#888]"><use href="#pin" /></svg>' : ""}
          </a>
        </li>`;

      document.getElementById("tree").innerHTML = tree
        .map((group) => `<li class="mb-[9px]"><ul>${group.map(row).join("")}</ul></li>`)
        .join("");
    </script>
  </body>
</html>
